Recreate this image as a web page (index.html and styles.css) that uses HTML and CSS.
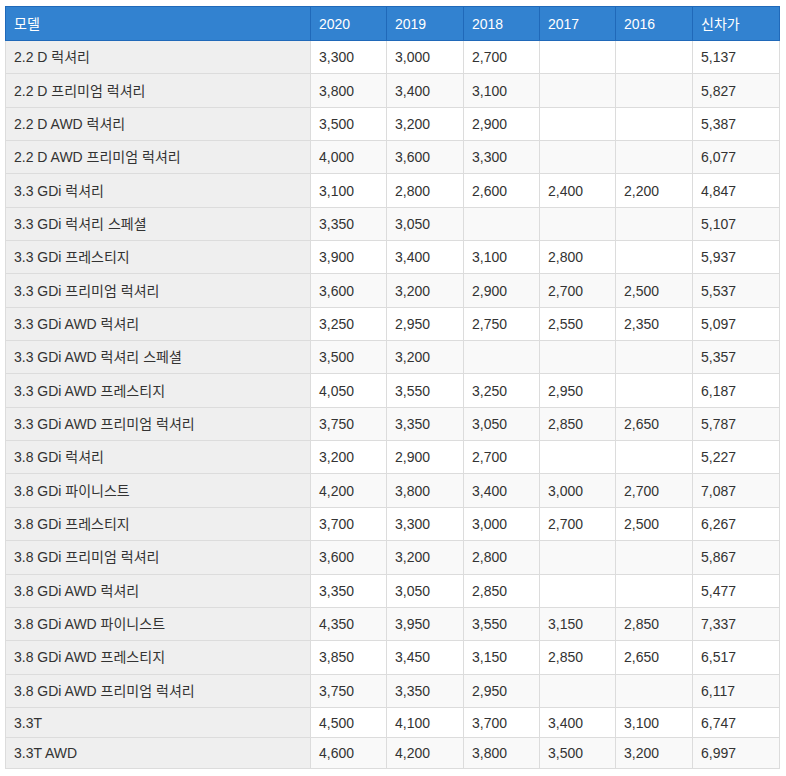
FILE: index.html
```html
<!DOCTYPE html>
<html lang="ko">
<head>
<meta charset="utf-8">
<title>중고차 시세</title>
<link rel="stylesheet" href="styles.css">
</head>
<body>
<table class="price-table">
  <colgroup>
    <col class="c-model"><col class="c-y"><col class="c-y2"><col class="c-y"><col class="c-y"><col class="c-y2"><col class="c-new">
  </colgroup>
  <thead>
    <tr><th>모델</th><th>2020</th><th>2019</th><th>2018</th><th>2017</th><th>2016</th><th>신차가</th></tr>
  </thead>
  <tbody>
    <tr><td>2.2 D 럭셔리</td><td>3,300</td><td>3,000</td><td>2,700</td><td></td><td></td><td>5,137</td></tr>
    <tr><td>2.2 D 프리미엄 럭셔리</td><td>3,800</td><td>3,400</td><td>3,100</td><td></td><td></td><td>5,827</td></tr>
    <tr><td>2.2 D AWD 럭셔리</td><td>3,500</td><td>3,200</td><td>2,900</td><td></td><td></td><td>5,387</td></tr>
    <tr><td>2.2 D AWD 프리미엄 럭셔리</td><td>4,000</td><td>3,600</td><td>3,300</td><td></td><td></td><td>6,077</td></tr>
    <tr><td>3.3 GDi 럭셔리</td><td>3,100</td><td>2,800</td><td>2,600</td><td>2,400</td><td>2,200</td><td>4,847</td></tr>
    <tr><td>3.3 GDi 럭셔리 스페셜</td><td>3,350</td><td>3,050</td><td></td><td></td><td></td><td>5,107</td></tr>
    <tr><td>3.3 GDi 프레스티지</td><td>3,900</td><td>3,400</td><td>3,100</td><td>2,800</td><td></td><td>5,937</td></tr>
    <tr><td>3.3 GDi 프리미엄 럭셔리</td><td>3,600</td><td>3,200</td><td>2,900</td><td>2,700</td><td>2,500</td><td>5,537</td></tr>
    <tr><td>3.3 GDi AWD 럭셔리</td><td>3,250</td><td>2,950</td><td>2,750</td><td>2,550</td><td>2,350</td><td>5,097</td></tr>
    <tr><td>3.3 GDi AWD 럭셔리 스페셜</td><td>3,500</td><td>3,200</td><td></td><td></td><td></td><td>5,357</td></tr>
    <tr><td>3.3 GDi AWD 프레스티지</td><td>4,050</td><td>3,550</td><td>3,250</td><td>2,950</td><td></td><td>6,187</td></tr>
    <tr><td>3.3 GDi AWD 프리미엄 럭셔리</td><td>3,750</td><td>3,350</td><td>3,050</td><td>2,850</td><td>2,650</td><td>5,787</td></tr>
    <tr><td>3.8 GDi 럭셔리</td><td>3,200</td><td>2,900</td><td>2,700</td><td></td><td></td><td>5,227</td></tr>
    <tr><td>3.8 GDi 파이니스트</td><td>4,200</td><td>3,800</td><td>3,400</td><td>3,000</td><td>2,700</td><td>7,087</td></tr>
    <tr><td>3.8 GDi 프레스티지</td><td>3,700</td><td>3,300</td><td>3,000</td><td>2,700</td><td>2,500</td><td>6,267</td></tr>
    <tr><td>3.8 GDi 프리미엄 럭셔리</td><td>3,600</td><td>3,200</td><td>2,800</td><td></td><td></td><td>5,867</td></tr>
    <tr><td>3.8 GDi AWD 럭셔리</td><td>3,350</td><td>3,050</td><td>2,850</td><td></td><td></td><td>5,477</td></tr>
    <tr><td>3.8 GDi AWD 파이니스트</td><td>4,350</td><td>3,950</td><td>3,550</td><td>3,150</td><td>2,850</td><td>7,337</td></tr>
    <tr><td>3.8 GDi AWD 프레스티지</td><td>3,850</td><td>3,450</td><td>3,150</td><td>2,850</td><td>2,650</td><td>6,517</td></tr>
    <tr><td>3.8 GDi AWD 프리미엄 럭셔리</td><td>3,750</td><td>3,350</td><td>2,950</td><td></td><td></td><td>6,117</td></tr>
    <tr class="short"><td>3.3T</td><td>4,500</td><td>4,100</td><td>3,700</td><td>3,400</td><td>3,100</td><td>6,747</td></tr>
    <tr class="short"><td>3.3T AWD</td><td>4,600</td><td>4,200</td><td>3,800</td><td>3,500</td><td>3,200</td><td>6,997</td></tr>
  </tbody>
</table>
</body>
</html>
```

FILE: styles.css
```css
html, body {
  margin: 0;
  padding: 0;
  background: #fff;
}

body {
  padding: 6px 0 0 5px;
  font-family: "Liberation Sans", Arial, "Noto Sans CJK KR", sans-serif;
  font-size: 14px;
  color: #333;
}

.price-table {
  border-collapse: collapse;
  table-layout: fixed;
  width: 774px;
}

.c-model { width: 305px; }
.c-y { width: 76px; }
.c-y2 { width: 77px; }
.c-new { width: 87px; }

.price-table th,
.price-table td {
  padding: 0 8px;
  text-align: left;
  vertical-align: middle;
  line-height: 16px;
  white-space: nowrap;
}

.price-table th {
  background: #3282d0;
  color: #fff;
  font-weight: normal;
  border: 1px solid #2069b9;
  height: 33px;
}

.price-table thead tr {
  height: 34px;
}

.price-table td {
  border: 1px solid #dcdcdc;
}

.price-table tbody tr {
  height: 33.35px;
  background: #fff;
}

.price-table tbody tr:nth-child(even) {
  background: #f9f9f9;
}

.price-table tbody tr.short {
  height: 30.5px;
}

.price-table tbody td:first-child {
  background: #efefef;
}
```
